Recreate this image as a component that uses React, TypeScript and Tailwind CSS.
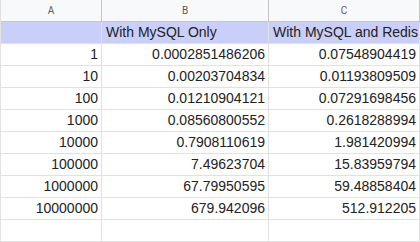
import { FC } from 'react';

const rows: [string, string, string][] = [
  ['1', '0.0002851486206', '0.07548904419'],
  ['10', '0.00203704834', '0.01193809509'],
  ['100', '0.01210904121', '0.07291698456'],
  ['1000', '0.08560800552', '0.2618288994'],
  ['10000', '0.7908110619', '1.981420994'],
  ['100000', '7.49623704', '15.83959794'],
  ['1000000', '67.79950595', '59.48858404'],
  ['10000000', '679.942096', '512.912205'],
];

const cell =
  'h-[22px] border-r border-b border-[#e1e1e1] flex items-center text-[14px] text-[#222222] whitespace-nowrap overflow-hidden font-["Liberation_Sans",Arial,sans-serif]';

const App: FC = () => {
  return (
    <div className="w-[420px] h-[242px] overflow-hidden bg-white font-[Roboto,sans-serif]">
      <div className="grid grid-cols-[101px_167px_151px] border-l border-[#e1e1e1]">
        {/* column header */}
        {['A', 'B', 'C'].map((col) => (
          <div
            key={col}
            className="h-[22px] bg-[#f8f9fa] border-r border-b border-[#c4c7c5] flex items-center justify-center text-[10px] text-[#575a5e]"
          >
            {col}
          </div>
        ))}

        {/* title row */}
        <div className={`${cell} bg-[#c9cff8]`} />
        <div className={`${cell} bg-[#c9cff8] pl-1`}>With MySQL Only</div>
        <div className={`${cell} bg-[#c9cff8] pl-1`}>With MySQL and Redis</div>

        {rows.map(([a, b, c]) => (
          <div key={a} className="contents">
            <div className={`${cell} justify-end pr-[3px]`}>{a}</div>
            <div className={`${cell} justify-end pr-[3px]`}>{b}</div>
            <div className={`${cell} justify-end pr-[3px]`}>{c}</div>
          </div>
        ))}

        {/* empty row */}
        <div className={cell} />
        <div className={cell} />
        <div className={cell} />
      </div>
    </div>
  );
};

export default App;
